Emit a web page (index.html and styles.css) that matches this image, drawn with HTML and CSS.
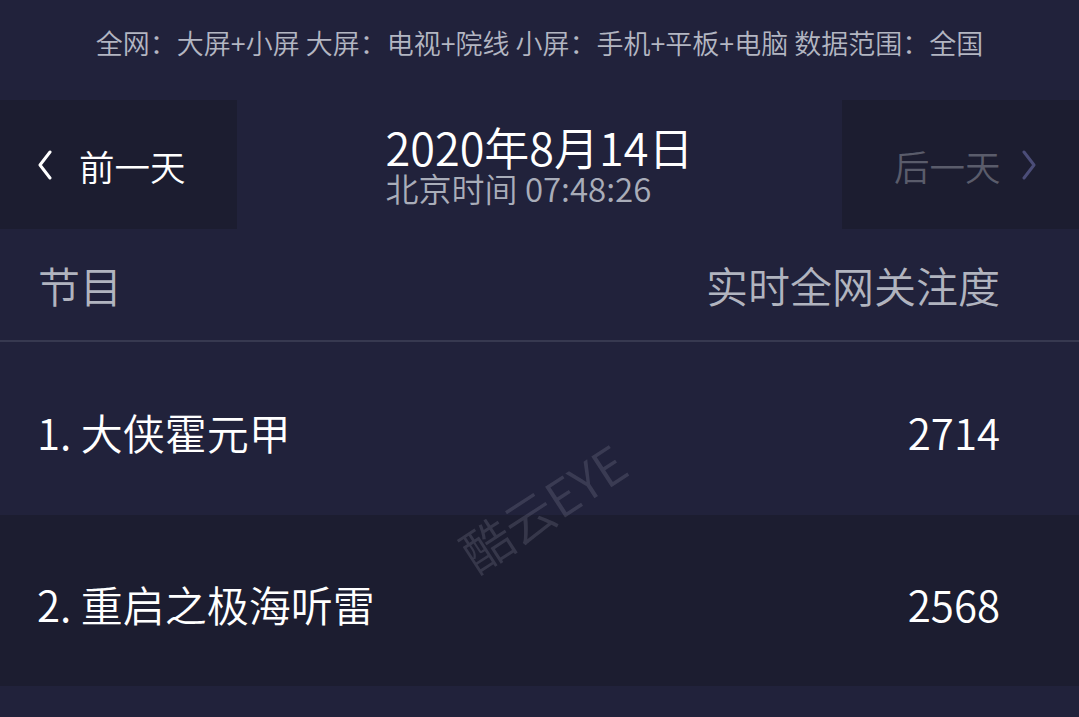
FILE: index.html
```html
<!DOCTYPE html>
<html lang="zh-CN">
<head>
<meta charset="utf-8">
<link rel="stylesheet" href="styles.css">
</head>
<body>
<div class="page">
  <div class="notice">全网：大屏+小屏 大屏：电视+院线 小屏：手机+平板+电脑 数据范围：全国</div>
  <div class="nav">
    <div class="nav-btn prev">
      <svg class="chev" width="16" height="30" viewBox="0 0 16 30"><polyline points="13,2 3,15 13,28" fill="none" stroke="#ffffff" stroke-width="3" stroke-linecap="round" stroke-linejoin="round"/></svg>
      <span>前一天</span>
    </div>
    <div class="date">
      <div class="date-main">2020年8月14日</div>
      <div class="date-sub">北京时间 07:48:26</div>
    </div>
    <div class="nav-btn next">
      <span>后一天</span>
      <svg class="chev" width="16" height="30" viewBox="0 0 16 30"><polyline points="3,2 13,15 3,28" fill="none" stroke="#4b4d78" stroke-width="3" stroke-linecap="round" stroke-linejoin="round"/></svg>
    </div>
  </div>
  <div class="thead">
    <span>节目</span>
    <span>实时全网关注度</span>
  </div>
  <div class="list">
    <div class="row">
      <span>1. 大侠霍元甲</span>
      <span>2714</span>
    </div>
    <div class="row alt">
      <span>2. 重启之极海听雷</span>
      <span>2568</span>
    </div>
    <div class="watermark">酷云EYE</div>
  </div>
</div>
</body>
</html>
```
FILE: styles.css
```css
html, body {
  margin: 0;
  padding: 0;
}
body {
  background: #21223b;
  font-family: "Noto Sans CJK SC", "Noto Sans", sans-serif;
  font-weight: 350;
  width: 1079px;
  height: 717px;
  overflow: hidden;
}
.page {
  display: flex;
  flex-direction: column;
}
.notice {
  height: 84px;
  margin-bottom: 16px;
  display: flex;
  align-items: center;
  justify-content: center;
  font-size: 27px;
  color: #b3b6c2;
  white-space: nowrap;
}
.nav {
  height: 129px;
  display: flex;
  justify-content: space-between;
  align-items: stretch;
}
.nav-btn {
  width: 237px;
  background: #1c1d30;
  display: flex;
  align-items: center;
  font-size: 35.5px;
}
.nav-btn.prev {
  padding-left: 37px;
  box-sizing: border-box;
  color: #ffffff;
  gap: 26px;
}
.nav-btn.next {
  padding-left: 52px;
  box-sizing: border-box;
  color: #5a5c6b;
  gap: 20px;
}
.nav-btn span {
  line-height: 1;
  padding-top: 2px;
}
.date {
  display: flex;
  flex-direction: column;
  align-items: flex-start;
  justify-content: center;
  padding-top: 0;
}
.date-main {
  font-size: 45px;
  line-height: 46px;
  color: #ffffff;
}
.date-sub {
  font-size: 33px;
  line-height: 36px;
  color: #a9adb9;
}
.thead {
  height: 111px;
  display: flex;
  justify-content: space-between;
  align-items: center;
  padding: 0 79px 0 38px;
  font-size: 42px;
  color: #b1b4bf;
  border-bottom: 2px solid #373950;
}
.list {
  position: relative;
}
.row {
  height: 173px;
  display: flex;
  justify-content: space-between;
  align-items: center;
  padding: 6px 79px 0 37px;
  box-sizing: border-box;
  font-size: 42px;
  color: #ffffff;
}
.row.alt {
  height: 171px;
  background: #1c1d30;
}
.watermark {
  position: absolute;
  left: 450px;
  top: 128px;
  font-size: 50px;
  color: rgba(150, 152, 170, 0.22);
  transform: rotate(-33deg);
  transform-origin: center;
  white-space: nowrap;
  pointer-events: none;
}
```
